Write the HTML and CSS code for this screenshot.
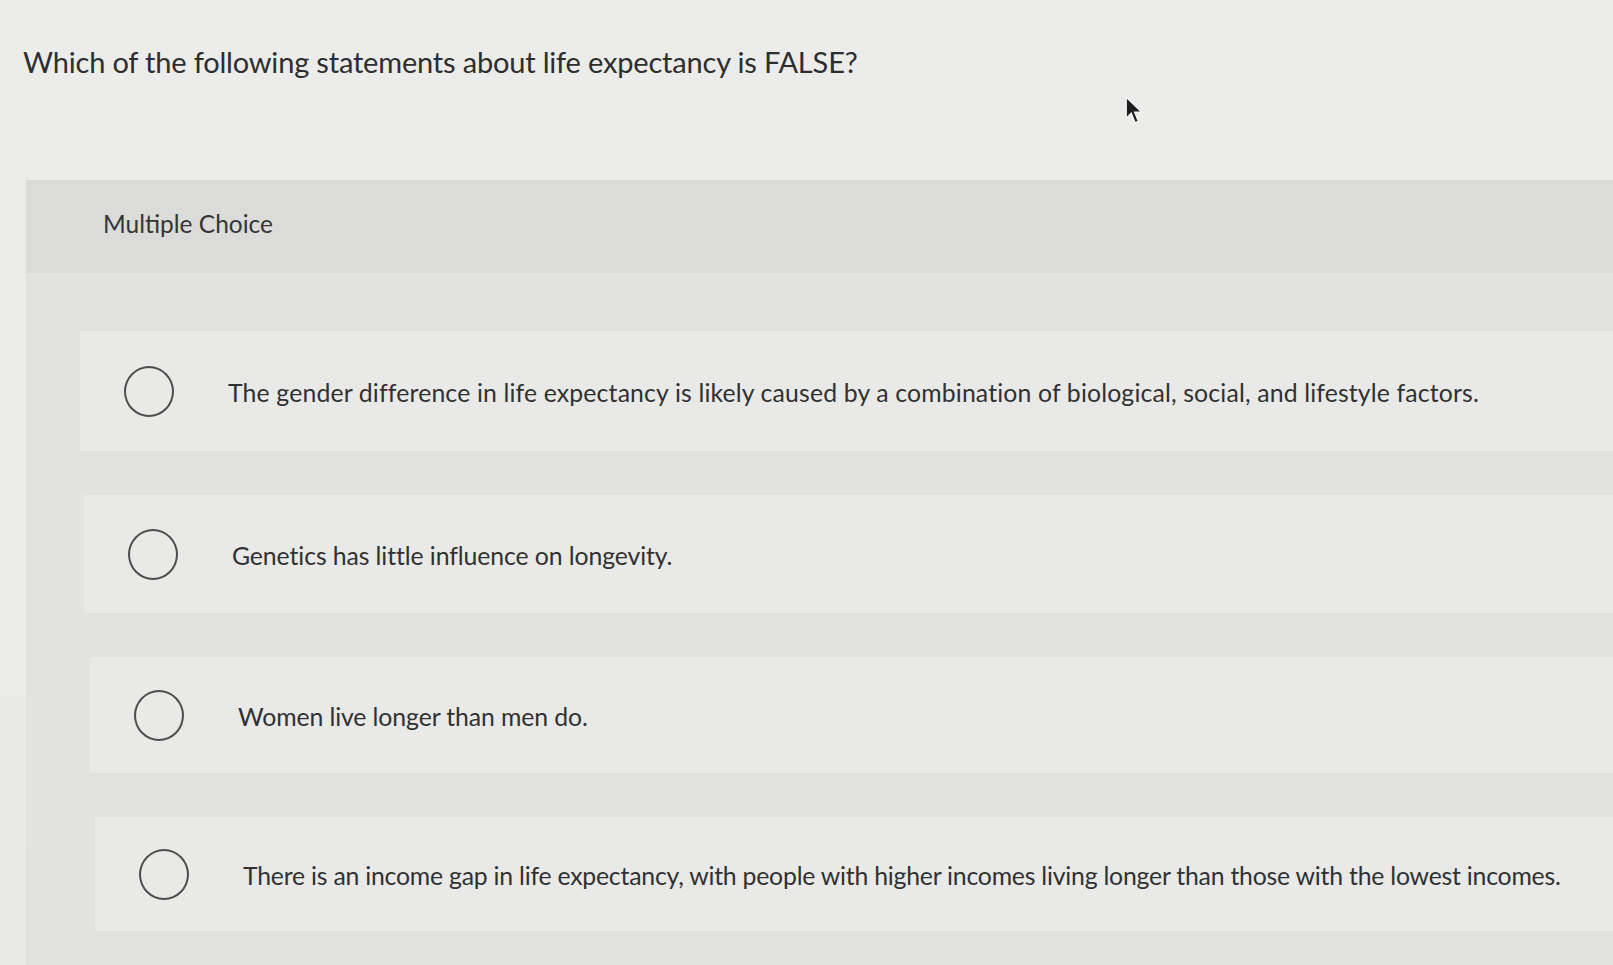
FILE: index.html
```html
<!DOCTYPE html>
<html lang="en">
<head>
<meta charset="utf-8">
<title>Multiple Choice</title>
<link rel="stylesheet" href="styles.css">
</head>
<body>
<div class="page">
  <h1 class="question">Which of the following statements about life expectancy is FALSE?</h1>
  <section class="card">
    <div class="card-head">Multiple Choice</div>
    <div class="options">
      <label class="option"><span class="radio"></span><span class="opt-text">The gender difference in life expectancy is likely caused by a combination of biological, social, and lifestyle factors.</span></label>
      <label class="option"><span class="radio"></span><span class="opt-text">Genetics has little influence on longevity.</span></label>
      <label class="option"><span class="radio"></span><span class="opt-text">Women live longer than men do.</span></label>
      <label class="option"><span class="radio"></span><span class="opt-text">There is an income gap in life expectancy, with people with higher incomes living longer than those with the lowest incomes.</span></label>
    </div>
  </section>
  <svg class="cursor" width="20" height="29" viewBox="0 0 18 26"><path d="M2 1 L2 20 L6.5 15.5 L10 24 L13 22.8 L9.6 14.6 L16 14.6 Z" fill="#1e1e1e" stroke="#f4f4f4" stroke-width="1.2"/></svg>
</div>
</body>
</html>
```
FILE: styles.css
```css
* { box-sizing: border-box; }
html, body { margin: 0; padding: 0; }
body {
  background: #e9e9e7;
  font-family: Lato, "Liberation Sans", Arial, sans-serif;
  color: #333;
  overflow: hidden;
  width: 1613px;
  height: 965px;
}
.page {
  position: relative;
  height: 965px;
  background: linear-gradient(180deg, #ececea 0%, #e9e9e7 100%);
}
.question {
  margin: 0;
  padding: 44px 0 0 23px;
  height: 180px;
  font-size: 29px;
  font-weight: 400;
  letter-spacing: -0.18px;
  color: #2e2e2e;
}
.card {
  margin-left: 26px;
  background: #e2e2e0;
  height: 785px;
}
.card-head {
  height: 93px;
  background: #dbdbd9;
  padding: 29px 0 0 77px;
  font-size: 24.5px;
  color: #353535;
}
.options {
  display: flex;
  flex-direction: column;
  gap: 44px;
  padding-top: 58px;
}
.option {
  display: flex;
  align-items: center;
  height: 120px;
  background: #e9e9e7;
  padding-left: 44px;
}
.option:nth-child(1) { margin-left: 54px; }
.option:nth-child(2) { margin-left: 58px; height: 118px; }
.option:nth-child(3) { margin-left: 64px; height: 116px; }
.option:nth-child(4) { margin-left: 69px; height: 114px; }
.option:nth-child(1) .opt-text { letter-spacing: 0.15px; }
.option:nth-child(4) .opt-text { letter-spacing: -0.22px; }
.radio {
  width: 50px;
  height: 51px;
  border: 2px solid #4d4d4d;
  border-radius: 50%;
  flex: none;
}
.opt-text {
  margin-left: 54px;
  padding-top: 3px;
  font-size: 24.8px;
  color: #313131;
  letter-spacing: -0.1px;
}
.cursor {
  position: absolute;
  left: 1124px;
  top: 96px;
}
```
